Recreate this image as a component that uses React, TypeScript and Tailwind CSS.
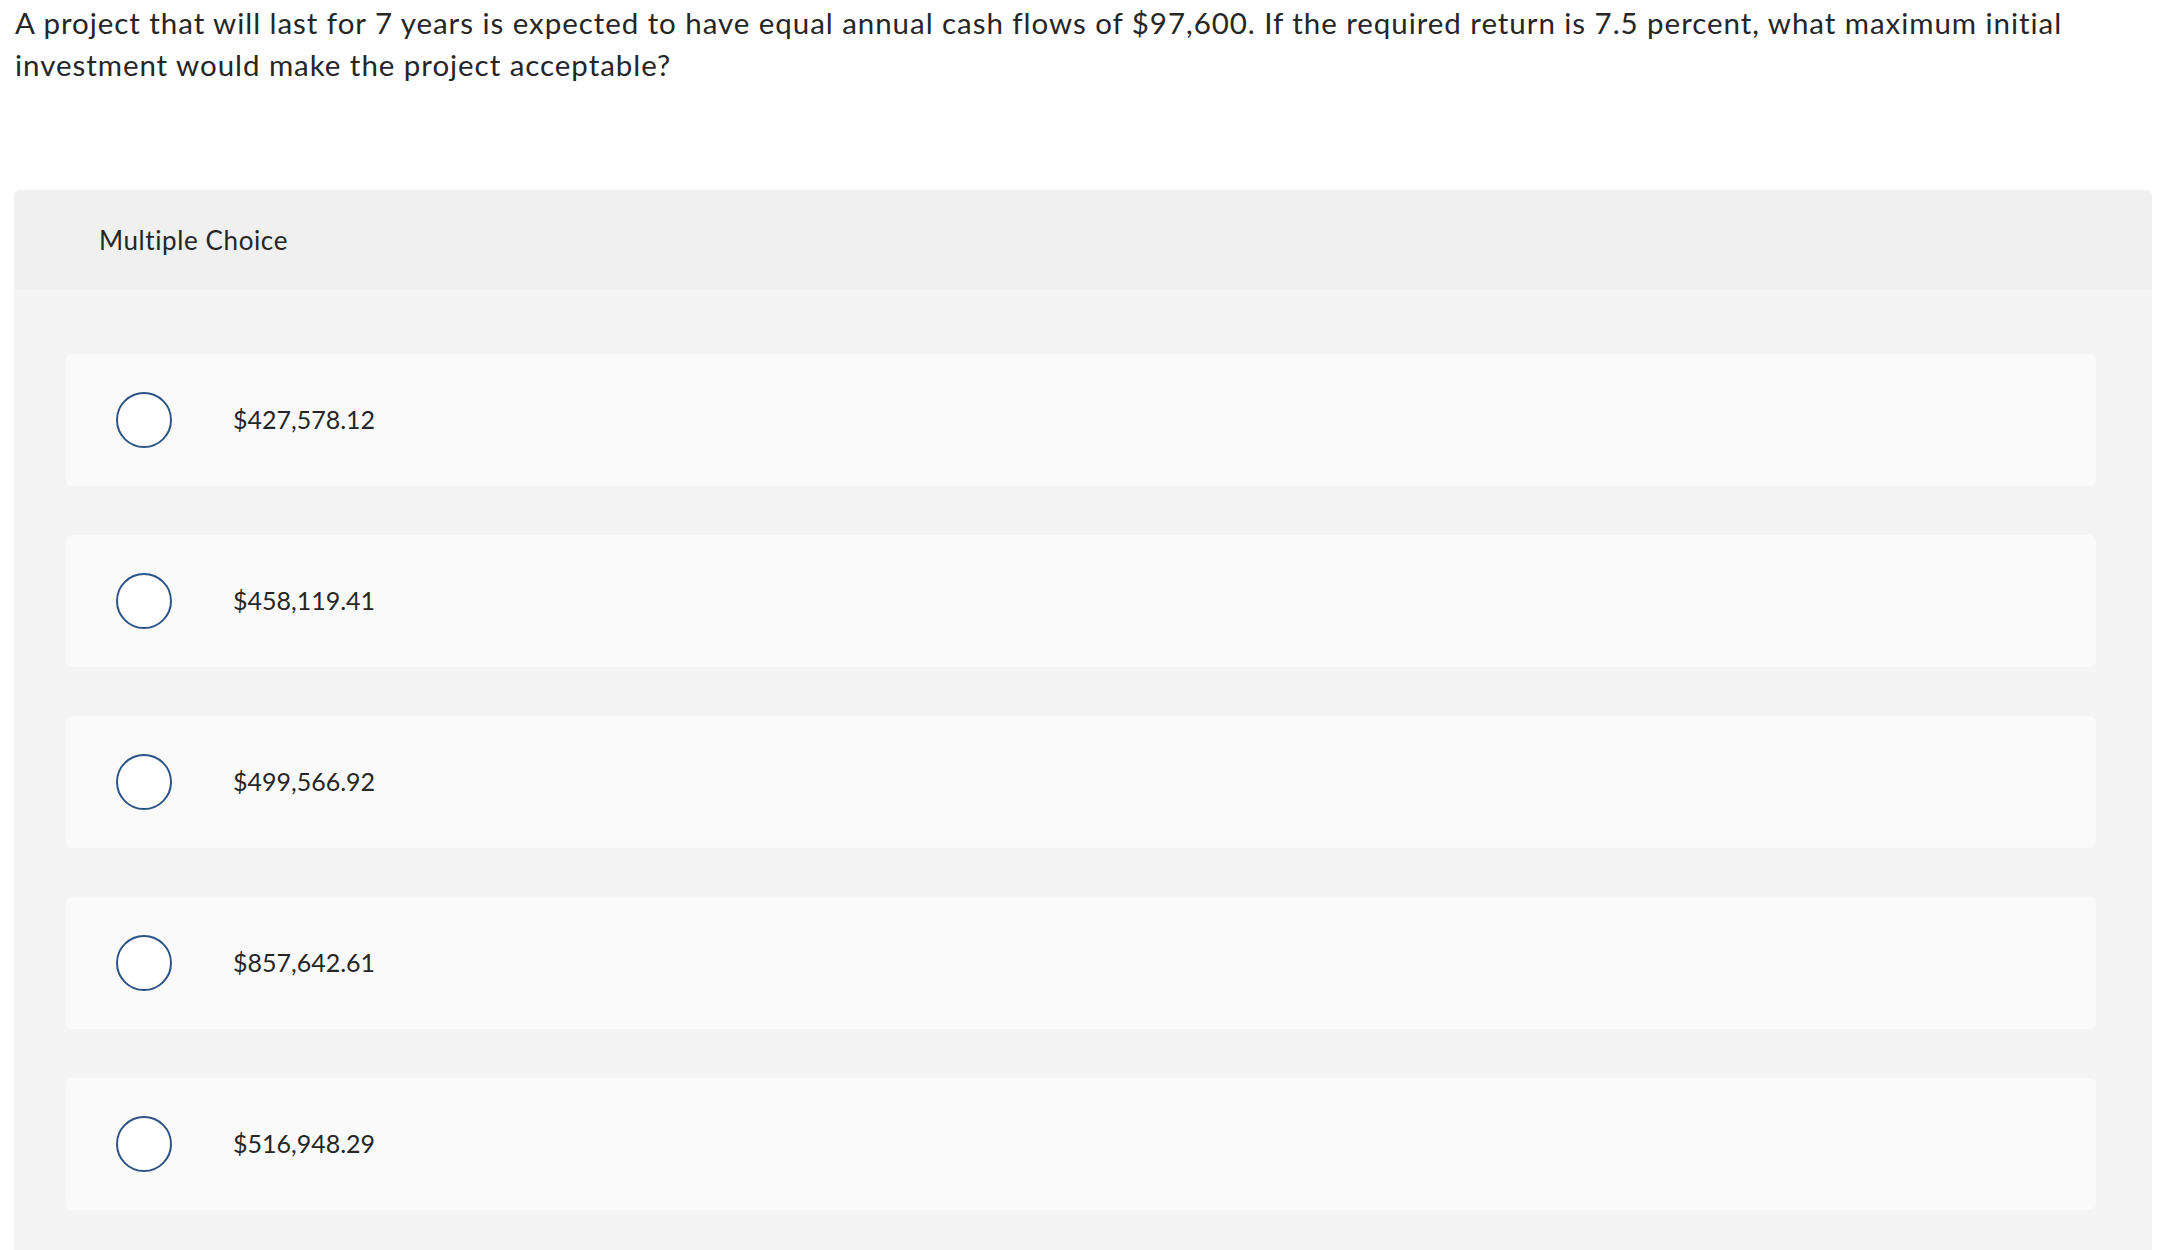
import React from "react";

const options = [
  "$427,578.12",
  "$458,119.41",
  "$499,566.92",
  "$857,642.61",
  "$516,948.29",
];

export default function App() {
  return (
    <div
      className="min-h-[1250px] bg-white text-[#262626]"
      style={{ fontFamily: "Lato, 'Liberation Sans', sans-serif" }}
    >
      <div className="pl-[15px] pr-[60px] pt-[2px] text-[29.5px] leading-[42px] tracking-[0.95px]">
        A project that will last for 7 years is expected to have equal annual cash flows of $97,600. If the required return is 7.5 percent, what maximum initial investment would make the project acceptable?
      </div>
      <div className="ml-[14px] mr-[6px] mt-[104px] overflow-hidden rounded-t-[6px] bg-[#f4f4f4]">
        <div className="flex h-[100px] items-center bg-[#f0f0f0] pl-[85px] text-[26px] tracking-[0.6px]">
          Multiple Choice
        </div>
        <div className="flex flex-col gap-[49px] pb-[60px] pl-[52px] pr-[56px] pt-[64px]">
          {options.map((o) => (
            <div
              key={o}
              className="flex h-[132px] items-center rounded-[6px] bg-[#fafafa] pl-[50px]"
            >
              <div className="h-[56px] w-[56px] shrink-0 rounded-full border-2 border-[#2c5487] bg-white" />
              <div className="ml-[61px] text-[25px]">{o}</div>
            </div>
          ))}
        </div>
      </div>
    </div>
  );
}
